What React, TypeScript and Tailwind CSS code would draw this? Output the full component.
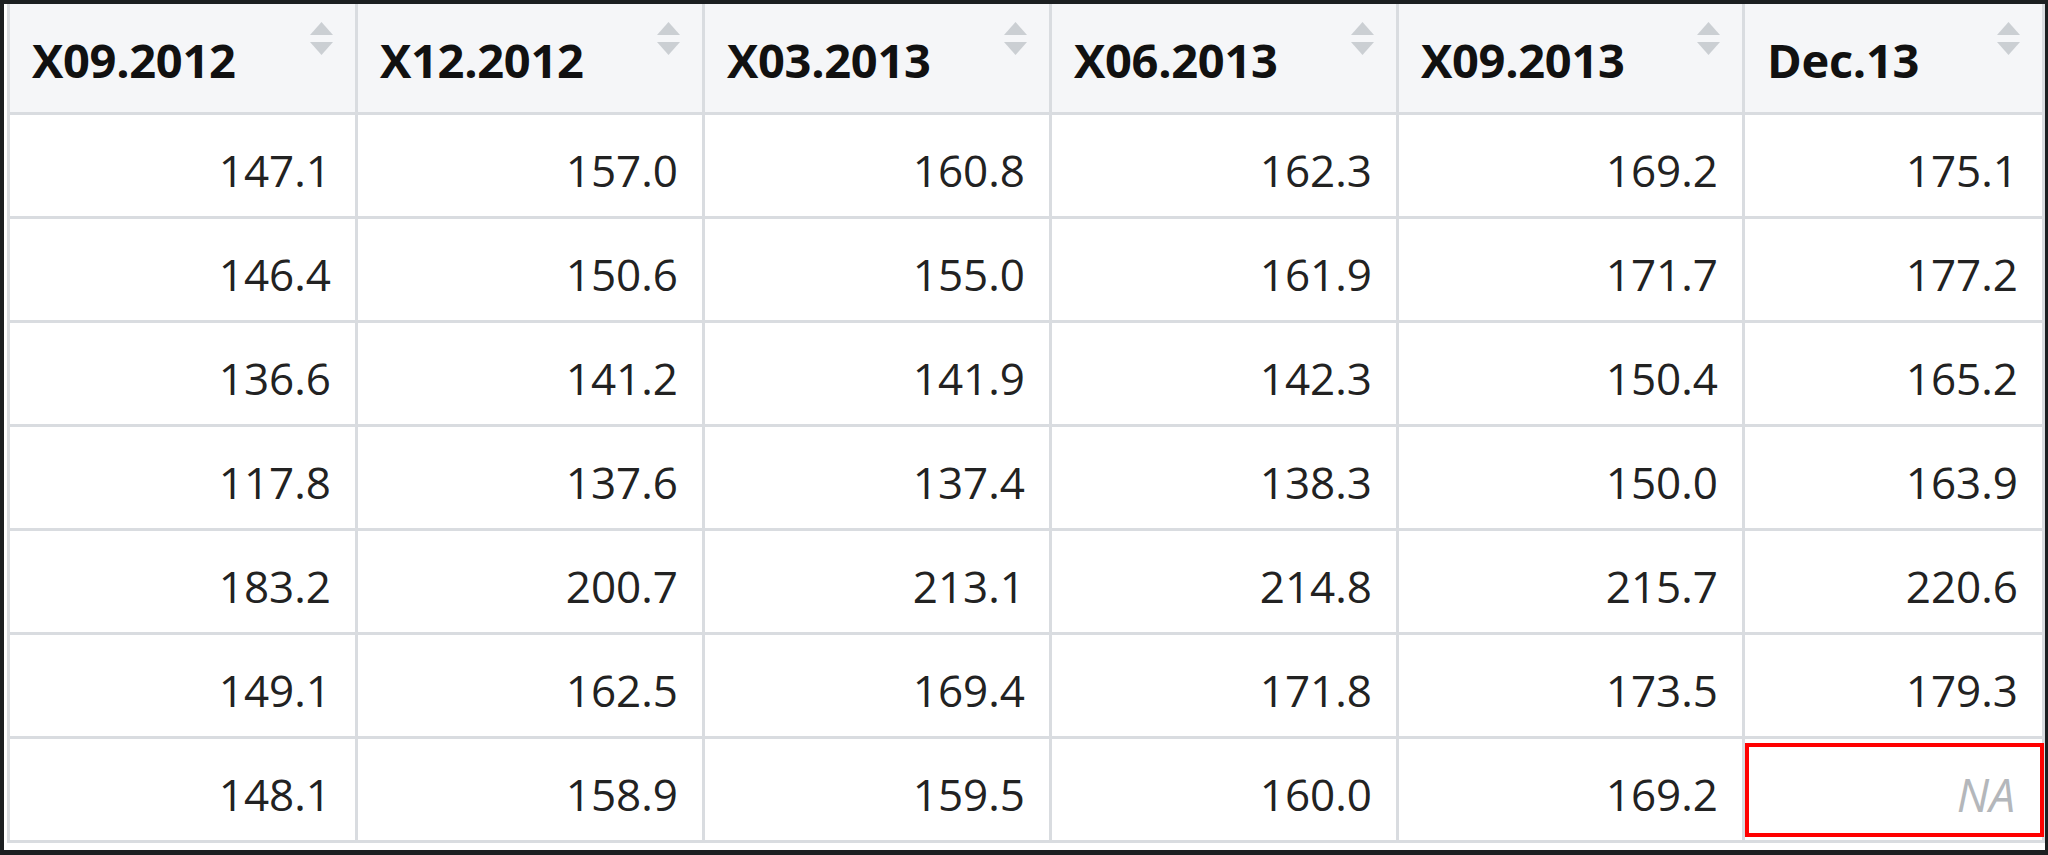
import React from 'react'

const headers = ['X09.2012', 'X12.2012', 'X03.2013', 'X06.2013', 'X09.2013', 'Dec.13']

const rows: (string | null)[][] = [
  ['147.1', '157.0', '160.8', '162.3', '169.2', '175.1'],
  ['146.4', '150.6', '155.0', '161.9', '171.7', '177.2'],
  ['136.6', '141.2', '141.9', '142.3', '150.4', '165.2'],
  ['117.8', '137.6', '137.4', '138.3', '150.0', '163.9'],
  ['183.2', '200.7', '213.1', '214.8', '215.7', '220.6'],
  ['149.1', '162.5', '169.4', '171.8', '173.5', '179.3'],
  ['148.1', '158.9', '159.5', '160.0', '169.2', null],
]

function SortIcon() {
  return (
    <svg width="23" height="34" viewBox="0 0 23 34" className="shrink-0 mt-[18px]">
      <polygon points="11.5,0 23,13 0,13" fill="#cbcfd3" />
      <polygon points="0,20 23,20 11.5,33" fill="#cbcfd3" />
    </svg>
  )
}

export default function App() {
  return (
    <div
      className="w-[2048px] h-[855px] bg-[#1c1f21] pt-[4px] pl-[4px] pr-[3px] pb-[5px]"
      style={{ fontFamily: '"Open Sans", "Noto Sans", sans-serif' }}
    >
      <div className="h-full bg-white pl-[3px]">
        <div className="grid grid-cols-[345px_344px_344px_344px_343px_297px] gap-[3px] bg-[#d9dce0] px-[3px] pb-[3px] w-[2038px]">
          {/* header */}
          {headers.map((h) => (
            <div key={h} className="h-[108px] bg-[#f5f6f8] flex justify-between pl-[22px] pr-[22px]">
              <span className="text-[47px] font-bold text-[#111] leading-none pt-[33px] tracking-[-0.3px]">{h}</span>
              <SortIcon />
            </div>
          ))}

          {/* body */}
          {rows.map((row, i) =>
            row.map((v, j) => (
              <div key={`${i}-${j}`} className="relative h-[101px] bg-white flex items-center justify-end pr-[24px]">
                {v === null ? (
                  <>
                    <span className="text-[46px] italic text-[#b4b7bb] leading-none pt-[8px] pr-[3px]">NA</span>
                    <div className="absolute left-0 right-[-2px] top-[4px] bottom-[3px] border-[4px] border-[#ff0000]" />
                  </>
                ) : (
                  <span className="text-[44px] text-[#222] leading-none pt-[8px]">{v}</span>
                )}
              </div>
            ))
          )}
        </div>
      </div>
    </div>
  )
}
